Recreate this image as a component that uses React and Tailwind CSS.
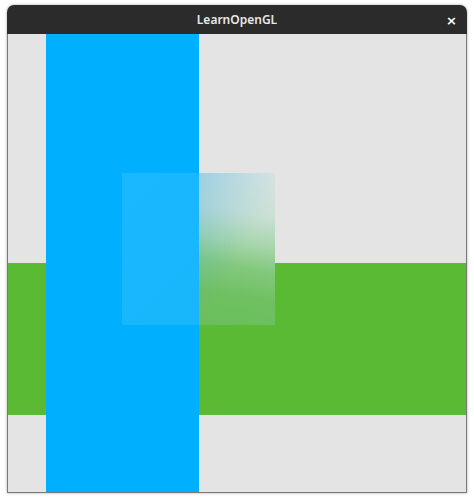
export default function App() {
  return (
    <div className="min-h-screen bg-white pt-[5px] pl-[7px]">
      <div className="w-[460px] rounded-t-[7px] overflow-hidden shadow-[0_0_3px_rgba(0,0,0,0.35)]">
        {/* title bar */}
        <div className="h-[29px] bg-[#2b2b2b] flex items-center relative">
          <div className="flex-1 text-center text-[12px] font-semibold text-[#e8e8e8] font-['Noto_Sans',sans-serif]">
            LearnOpenGL
          </div>
          <span className="absolute right-[10px] top-[6px] text-[13px] font-bold text-white font-['DejaVu_Sans',sans-serif]">
            ×
          </span>
        </div>

        {/* GL canvas: rendered quads sit at their scene coordinates */}
        <div className="relative h-[459px] bg-[#e4e4e4] border-x border-b border-[#7a7a7a]">
          <div className="absolute left-0 right-0 top-[229px] h-[152px] bg-[#5bba33]" />
          <div className="absolute top-0 bottom-0 left-[38px] w-[153px] bg-[#00b0ff]" />
          {/* frosted window quad */}
          <div className="absolute left-[114px] top-[139px] w-[153px] h-[152px] flex">
            <div className="w-[77px] bg-[linear-gradient(135deg,rgba(255,255,255,0.1),rgba(150,210,225,0.16))]" />
            <div className="flex-1 bg-[linear-gradient(120deg,rgba(40,165,235,0.32)_0%,rgba(40,165,235,0.1)_35%,rgba(40,165,235,0)_55%),linear-gradient(190deg,#dce5e2_0%,#c9dfd4_28%,#a6d5aa_46%,#84c97e_60%,#70c062_78%,#6abf5a_100%)]" />
          </div>
        </div>
      </div>
    </div>
  );
}
